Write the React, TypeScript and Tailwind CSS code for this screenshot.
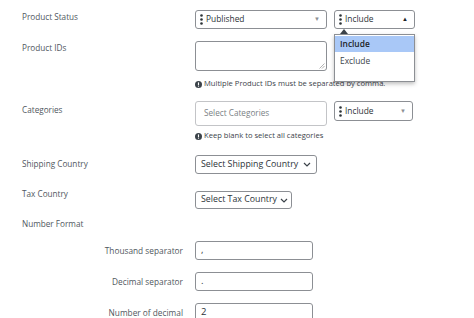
import React from "react";

const Dots = () => (
  <svg width="3" height="11" viewBox="0 0 3 11" className="shrink-0">
    <circle cx="1.5" cy="1.5" r="1.3" fill="#2c3338" />
    <circle cx="1.5" cy="5.5" r="1.3" fill="#2c3338" />
    <circle cx="1.5" cy="9.5" r="1.3" fill="#2c3338" />
  </svg>
);

const Info = () => (
  <svg width="7" height="7" viewBox="0 0 10 10" className="shrink-0">
    <circle cx="5" cy="5" r="5" fill="#3c434a" />
    <rect x="4.2" y="2" width="1.6" height="3.8" fill="#fff" />
    <rect x="4.2" y="6.6" width="1.6" height="1.5" fill="#fff" />
  </svg>
);

const Chevron = () => (
  <svg width="8" height="5" viewBox="0 0 8 5" className="shrink-0">
    <path d="M1 1 L4 4 L7 1" fill="none" stroke="#3c434a" strokeWidth="1.2" />
  </svg>
);

export default function App() {
  const font = { fontFamily: '"Open Sans", "Noto Sans", sans-serif' };
  return (
    <div className="w-[474px] h-[318px] overflow-hidden bg-white text-[#50575e] relative whitespace-nowrap" style={font}>
      <div className="pt-[10px]">
        {/* Product Status */}
        <div className="flex">
          <div className="w-[195px] pl-[22px] text-[8.2px] leading-[16px] -mt-[1px]">Product Status</div>
          <div className="w-[132px] h-[19px] border border-[#8c8f94] rounded-[3px] flex items-center pl-[4px] pr-[6px] gap-[3px]">
            <Dots />
            <span className="text-[8.4px] text-[#2c3338] flex-1">Published</span>
            <span className="text-[6px] text-[#8c8f94]">▼</span>
          </div>
          <div className="relative ml-[7px]">
            <div className="w-[81px] h-[19px] border border-[#8c8f94] rounded-[3px] flex items-center pl-[4px] pr-[6px] gap-[3px]">
              <Dots />
              <span className="text-[8.4px] text-[#2c3338] flex-1">Include</span>
              <span className="text-[6px] text-[#1d2327]">▲</span>
            </div>
            <div className="absolute left-[6px] top-[19px] w-0 h-0 border-l-[4px] border-r-[4px] border-b-[5px] border-l-transparent border-r-transparent border-b-[#3c434a]" />
            <div className="absolute left-0 top-[24px] w-[81px] h-[48px] bg-white border border-[#8c8f94] shadow-[0_2px_4px_rgba(0,0,0,0.25)] pt-[1px] z-10">
              <div className="h-[16px] bg-[#a9c8f7] text-[8.4px] font-semibold text-[#1d2327] leading-[16px] pl-[5px]">Include</div>
              <div className="h-[16px] text-[8.4px] text-[#3c434a] leading-[16px] pl-[5px] mt-[1px]">Exclude</div>
            </div>
          </div>
        </div>

        {/* Product IDs */}
        <div className="flex mt-[12px]">
          <div className="w-[195px] pl-[22px] text-[8.2px] leading-[16px] -mt-[1px]">Product IDs</div>
          <div className="w-[132px] h-[30px] border border-[#8c8f94] rounded-[3px] relative">
            <svg width="6" height="6" viewBox="0 0 6 6" className="absolute right-[1px] bottom-[1px]">
              <path d="M5.5 0.5 L0.5 5.5 M5.5 3 L3 5.5" stroke="#a0a0a0" strokeWidth="0.8" />
            </svg>
          </div>
        </div>
        <div className="flex mt-[6px] pl-[195px] items-center gap-[2px] h-[14px]">
          <Info />
          <span className="text-[7.6px] font-medium text-[#3c434a]">Multiple Product IDs must be separated by comma.</span>
        </div>

        {/* Categories */}
        <div className="flex mt-[10px]">
          <div className="w-[195px] pl-[22px] text-[8.2px] leading-[16px] pt-[1px]">Categories</div>
          <div className="w-[132px] h-[25px] border border-[#c3c4c7] rounded-[3px] flex items-center pl-[8px]">
            <span className="text-[8.2px] text-[#7a7f85]">Select Categories</span>
          </div>
          <div className="ml-[7px] w-[79px] h-[20px] border border-[#8c8f94] rounded-[3px] flex items-center pl-[4px] pr-[6px] gap-[3px]">
            <Dots />
            <span className="text-[8.4px] text-[#2c3338] flex-1">Include</span>
            <span className="text-[6px] text-[#8c8f94]">▼</span>
          </div>
        </div>
        <div className="flex mt-[3px] pl-[195px] items-center gap-[2px] h-[14px]">
          <Info />
          <span className="text-[7.6px] font-medium text-[#3c434a]">Keep blank to select all categories</span>
        </div>

        {/* Shipping Country */}
        <div className="flex mt-[12px] items-center">
          <div className="w-[195px] pl-[22px] text-[8.2px] leading-[16px] -mt-[1px]">Shipping Country</div>
          <div className="w-[122px] h-[19px] border border-[#8c8f94] rounded-[3px] flex items-center pl-[5px] pr-[5px] gap-[3px]">
            <span className="text-[8.8px] text-[#2c3338] flex-1">Select Shipping Country</span>
            <Chevron />
          </div>
        </div>

        {/* Tax Country */}
        <div className="flex mt-[17px]">
          <div className="w-[195px] pl-[22px] text-[8.2px] leading-[16px] -mt-[5px]">Tax Country</div>
          <div className="w-[97px] h-[18px] border border-[#8c8f94] rounded-[3px] flex items-center pl-[5px] pr-[5px] gap-[3px]">
            <span className="text-[8.8px] text-[#2c3338] flex-1">Select Tax Country</span>
            <Chevron />
          </div>
        </div>

        {/* Number Format */}
        <div className="pl-[22px] text-[8.2px] leading-[16px] mt-[7px]">Number Format</div>

        {[
          { label: "Thousand separator", value: "," },
          { label: "Decimal separator", value: "." },
          { label: "Number of decimal", value: "2" },
        ].map((r, i) => (
          <div key={r.label} className={`flex items-center ${i === 0 ? "mt-[9px]" : "mt-[12px]"}`}>
            <div className="w-[183px] text-right text-[8.3px] leading-[16px]">{r.label}</div>
            <div className="ml-[12px] w-[118px] h-[19px] border border-[#8c8f94] rounded-[3px] flex items-center pl-[5px]">
              <span className="text-[9.5px] text-[#2c3338]">{r.value}</span>
            </div>
          </div>
        ))}
      </div>
    </div>
  );
}
